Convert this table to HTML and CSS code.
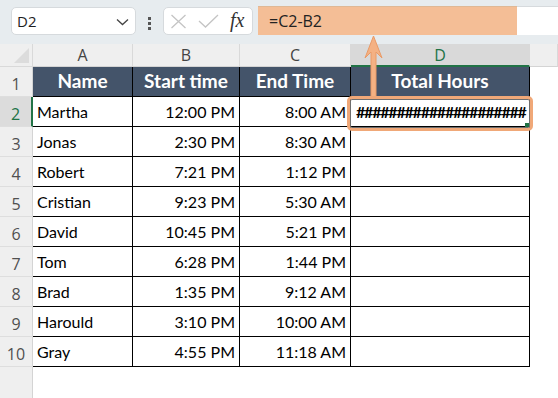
FILE: index.html
```html
<!DOCTYPE html>
<html>
<head>
<meta charset="utf-8">
<link rel="stylesheet" href="styles.css">
</head>
<body>
<div class="app">
  <div class="toolbar">
    <div class="namebox">
      <span>D2</span>
      <svg class="chev" width="13" height="8" viewBox="0 0 13 8"><path d="M1 1.5 L6.5 6.5 L12 1.5" fill="none" stroke="#444" stroke-width="1.3"/></svg>
    </div>
    <div class="dots"><i></i><i></i><i></i></div>
    <div class="fxbox">
      <svg width="18" height="15" viewBox="0 0 18 15"><path d="M1.5 1 L15.5 14 M15.5 1 L1.5 14" stroke="#c4c4c4" stroke-width="1.3" fill="none"/></svg>
      <svg width="21" height="14" viewBox="0 0 21 14"><path d="M1 7 L7.5 13 L20 1" stroke="#c4c4c4" stroke-width="1.3" fill="none"/></svg>
      <span class="fx">fx</span>
    </div>
    <div class="formula"><div class="formula-hl">=C2-B2</div></div>
  </div>

  <div class="sheet">
    <div class="corner"><span class="tri"></span></div>
    <div class="colhead">A</div>
    <div class="colhead">B</div>
    <div class="colhead">C</div>
    <div class="colhead active">D</div>
    <div class="colhead"></div>

    <div class="rowhead">1</div>
    <div class="th">Name</div>
    <div class="th">Start time</div>
    <div class="th">End Time</div>
    <div class="th">Total Hours</div>
    <div class="blank"></div>

    <div class="rowhead active">2</div>
    <div class="td">Martha</div>
    <div class="td num">12:00 PM</div>
    <div class="td num">8:00 AM</div>
    <div class="td sel">#####################</div>
    <div class="blank"></div>

    <div class="rowhead">3</div>
    <div class="td">Jonas</div>
    <div class="td num">2:30 PM</div>
    <div class="td num">8:30 AM</div>
    <div class="td"></div>
    <div class="blank"></div>

    <div class="rowhead">4</div>
    <div class="td">Robert</div>
    <div class="td num">7:21 PM</div>
    <div class="td num">1:12 PM</div>
    <div class="td"></div>
    <div class="blank"></div>

    <div class="rowhead">5</div>
    <div class="td">Cristian</div>
    <div class="td num">9:23 PM</div>
    <div class="td num">5:30 AM</div>
    <div class="td"></div>
    <div class="blank"></div>

    <div class="rowhead">6</div>
    <div class="td">David</div>
    <div class="td num">10:45 PM</div>
    <div class="td num">5:21 PM</div>
    <div class="td"></div>
    <div class="blank"></div>

    <div class="rowhead">7</div>
    <div class="td">Tom</div>
    <div class="td num">6:28 PM</div>
    <div class="td num">1:44 PM</div>
    <div class="td"></div>
    <div class="blank"></div>

    <div class="rowhead">8</div>
    <div class="td">Brad</div>
    <div class="td num">1:35 PM</div>
    <div class="td num">9:12 AM</div>
    <div class="td"></div>
    <div class="blank"></div>

    <div class="rowhead">9</div>
    <div class="td">Harould</div>
    <div class="td num">3:10 PM</div>
    <div class="td num">10:00 AM</div>
    <div class="td"></div>
    <div class="blank"></div>

    <div class="rowhead">10</div>
    <div class="td">Gray</div>
    <div class="td num">4:55 PM</div>
    <div class="td num">11:18 AM</div>
    <div class="td"></div>
    <div class="blank"></div>

    <div class="rowhead filler"></div>
    <div class="blank span"></div>
  </div>

  <svg class="arrow" width="24" height="64" viewBox="0 0 24 64">
    <path d="M11.5 1 L20 23 L14 17 L14 62 L9 62 L9 17 L3 23 Z" fill="#f4b183" stroke="#e99a66" stroke-width="1"/>
  </svg>
  <div class="callout"><span class="handle"></span></div>
</div>
</body>
</html>
```
FILE: styles.css
```css
body {
  margin: 0;
  background: #fff;
}

.app {
  position: relative;
  width: 558px;
  height: 398px;
  overflow: hidden;
  background: #fff;
}

.toolbar {
  height: 44px;
  box-sizing: border-box;
  background: #e7ecef;
  display: flex;
  align-items: flex-start;
  padding: 7px 0 0 11px;
}

.namebox {
  width: 125px;
  height: 28px;
  box-sizing: border-box;
  background: #fff;
  border: 1px solid #d6dadd;
  border-radius: 5px;
  display: flex;
  align-items: center;
  justify-content: space-between;
  padding: 0 6px 0 5px;
  font: 15px "Open Sans", sans-serif;
  color: #1e1e1e;
}

.chev {
  margin-top: 1px;
}

.dots {
  margin: 10px 0 0 12px;
  width: 3px;
  display: flex;
  flex-direction: column;
  gap: 2px;
}

.dots i {
  display: block;
  width: 3px;
  height: 3px;
  background: #555;
}

.fxbox {
  margin-left: 12px;
  width: 90px;
  height: 28px;
  box-sizing: border-box;
  background: #fff;
  border: 1px solid #d6dadd;
  border-radius: 5px;
  display: flex;
  align-items: center;
  padding-left: 6px;
  gap: 10px;
}

.fx {
  font: italic 20px "Liberation Serif", serif;
  color: #333;
  margin-left: 1px;
  margin-top: -2px;
}

.formula {
  margin: -1px 0 0 5px;
  flex: 1;
  height: 29px;
  box-sizing: border-box;
  background: #fff;
  border-top: 1px solid #d6dadd;
}

.formula-hl {
  width: 259px;
  height: 29px;
  margin-top: -1px;
  box-sizing: border-box;
  background: #f4be96;
  border-top: 1px solid #dfb895;
  padding-left: 11px;
  font: 16px "Open Sans", sans-serif;
  line-height: 28px;
  color: #222;
}

.sheet {
  display: grid;
  grid-template-columns: 33px 100px 107px 111px 179px 1fr;
  grid-template-rows: 23px repeat(10, 30px) 1fr;
  height: 354px;
}

.corner {
  position: relative;
  background: #efefef;
  border-right: 1px solid #d9d9d9;
  border-bottom: 1px solid #d9d9d9;
}

.tri {
  position: absolute;
  right: 3px;
  bottom: 3px;
  width: 15px;
  height: 15px;
  background: #dcdcdc;
  clip-path: polygon(100% 0, 100% 100%, 0 100%);
}

.colhead {
  background: #efefef;
  border-right: 1px solid #d9d9d9;
  border-bottom: 1px solid #d4d4d4;
  font: 16px "Open Sans", sans-serif;
  color: #444;
  text-align: center;
  line-height: 23px;
}

.colhead.active {
  background: #d9d9d9;
  color: #217346;
  border-bottom: 2px solid #217346;
}

.rowhead {
  background: #efefef;
  border-right: 1px solid #d4d4d4;
  border-bottom: 1px solid #dedede;
  font: 16px "Open Sans", sans-serif;
  color: #505050;
  text-align: center;
  box-sizing: border-box;
  padding-top: 5px;
  line-height: 24px;
}

.rowhead.active {
  background: #dcdcdc;
  color: #217346;
  border-right: 2px solid #217346;
}

.rowhead.filler {
  border-bottom: none;
}

.th {
  background: #44546a;
  color: #fff;
  font: bold 19px "Lato", sans-serif;
  text-align: center;
  border-right: 1px solid #000;
  border-bottom: 1px solid #000;
  box-sizing: border-box;
  padding-top: 3px;
  line-height: 22px;
  white-space: nowrap;
}

.td {
  font: 16px "Lato", sans-serif;
  color: #000;
  border-right: 1px solid #000;
  border-bottom: 1px solid #000;
  box-sizing: border-box;
  padding: 5px 4px 0 4px;
  line-height: 20px;
  white-space: nowrap;
  overflow: hidden;
}

.td.num {
  text-align: right;
}

.td.sel {
  padding-left: 5px;
  letter-spacing: -1.2px;
  font-weight: bold;
}

.blank {
  background: #fff;
}

.blank.span {
  grid-column: 2 / 7;
}

.arrow {
  position: absolute;
  left: 362px;
  top: 35px;
}

.callout {
  position: absolute;
  left: 347px;
  top: 96px;
  width: 186px;
  height: 35px;
  box-sizing: border-box;
  border: 3px solid #f0a878;
  border-radius: 5px;
  box-shadow: inset 0 0 0 1px #6e6e6e;
}

.handle {
  position: absolute;
  right: 1px;
  bottom: 1px;
  width: 4px;
  height: 4px;
  background: #217346;
}
```
